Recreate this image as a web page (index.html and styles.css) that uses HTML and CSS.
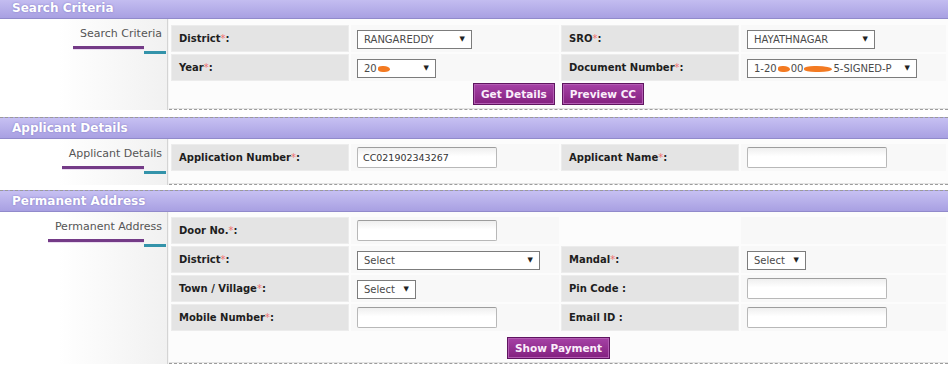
FILE: index.html
```html
<!DOCTYPE html>
<html lang="en">
<head>
  <meta charset="UTF-8">
  <meta name="viewport" content="width=device-width, initial-scale=1.0">
  <title>Certified Copy Request</title>
  <link rel="stylesheet" href="styles.css">
</head>
<body>
<div class="page">

  <!-- search criteria -->
  <div class="section first">
    <div class="sec-head">Search Criteria</div>
    <div class="sec-body">
      <div class="side">
        <div class="side-title">Search Criteria
          <div class="uline"><i class="purple"></i><i class="teal"></i></div>
        </div>
      </div>
      <div class="main">
        <table class="form top4">
          <colgroup><col class="c-lbl"><col class="c-val"><col class="c-lbl"><col></colgroup>
          <tr>
            <td class="lbl">District<span class="req">*</span>:</td>
            <td class="val"><span class="sel w-rr">RANGAREDDY<b>▼</b></span></td>
            <td class="lbl">SRO<span class="req">*</span>:</td>
            <td class="val"><span class="sel w-sro">HAYATHNAGAR<b>▼</b></span></td>
          </tr>
          <tr>
            <td class="lbl">Year<span class="req">*</span>:</td>
            <td class="val"><span class="sel w-year"><span>20<em class="blot"></em></span><b>▼</b></span></td>
            <td class="lbl">Document Number<span class="req">*</span>:</td>
            <td class="val"><span class="sel w-doc"><span>1-20<em class="blot"></em>00<em class="blot long"></em>5-SIGNED-P</span><b>▼</b></span></td>
          </tr>
        </table>
        <div class="actions">
          <button class="btn">Get Details</button>
          <button class="btn">Preview CC</button>
        </div>
      </div>
    </div>
  </div>

  <!-- applicant -->
  <div class="section">
    <div class="sec-head">Applicant Details</div>
    <div class="sec-body">
      <div class="side">
        <div class="side-title">Applicant Details
          <div class="uline"><i class="purple"></i><i class="teal"></i></div>
        </div>
      </div>
      <div class="main">
        <table class="form">
          <colgroup><col class="c-lbl"><col class="c-val"><col class="c-lbl"><col></colgroup>
          <tr>
            <td class="lbl">Application Number<span class="req">*</span>:</td>
            <td class="val"><input class="txt" type="text" value="CC021902343267"></td>
            <td class="lbl">Applicant Name<span class="req">*</span>:</td>
            <td class="val"><input class="txt" type="text"></td>
          </tr>
        </table>
        <div class="actions empty"></div>
      </div>
    </div>
  </div>

  <!-- address -->
  <div class="section">
    <div class="sec-head">Permanent Address</div>
    <div class="sec-body">
      <div class="side">
        <div class="side-title">Permanent Address
          <div class="uline"><i class="purple"></i><i class="teal"></i></div>
        </div>
      </div>
      <div class="main">
        <table class="form">
          <colgroup><col class="c-lbl"><col class="c-val"><col class="c-lbl"><col></colgroup>
          <tr>
            <td class="lbl">Door No.<span class="req">*</span>:</td>
            <td class="val"><input class="txt" type="text"></td>
            <td class="blank"></td>
            <td class="val"></td>
          </tr>
          <tr>
            <td class="lbl">District<span class="req">*</span>:</td>
            <td class="val"><span class="sel w-dist">Select<b>▼</b></span></td>
            <td class="lbl">Mandal<span class="req">*</span>:</td>
            <td class="val"><span class="sel w-small">Select<b>▼</b></span></td>
          </tr>
          <tr>
            <td class="lbl">Town / Village<span class="req">*</span>:</td>
            <td class="val"><span class="sel w-small">Select<b>▼</b></span></td>
            <td class="lbl">Pin Code :</td>
            <td class="val"><input class="txt" type="text"></td>
          </tr>
          <tr>
            <td class="lbl">Mobile Number<span class="req">*</span>:</td>
            <td class="val"><input class="txt" type="text"></td>
            <td class="lbl">Email ID :</td>
            <td class="val"><input class="txt" type="text"></td>
          </tr>
        </table>
        <div class="actions pad">
          <button class="btn">Show Payment</button>
        </div>
      </div>
    </div>
  </div>

</div>
</body>
</html>
```

FILE: styles.css
```css
body { /* page */
  margin: 0;
  font-family: "DejaVu Sans", Verdana, sans-serif;
  background-color: #fff;
  color: #222;
}
.page {
  width: 948px;
  margin-top: -2px; /* top of the first bar is scrolled off */
  overflow: hidden;
}
.section {
  margin-bottom: 5px;
}
.section.first {
  margin-bottom: 7px;
}
.sec-head { /* lavender title bar */
  height: 20px;
  line-height: 21px;
  padding-left: 12px;
  background: linear-gradient(#c6c0f2, #a8a0e2);
  border-top: 1px dashed #9a9a9a;
  border-bottom: 1px solid #918acb;
  color: #fff;
  font-size: 12px;
  font-weight: bold;
  text-shadow: 0 0 2px #7d74c2;
}
.first .sec-head {
  border-top: none;
}
.sec-body {
  display: flex;
}
.side { /* left caption column */
  width: 168px;
  flex: none;
  padding: 8px 1px 0 0;
  box-sizing: border-box;
  text-align: right;
  background: linear-gradient(to right, #fff 35%, #f1f1f1);
  border-right: 1px solid #d4d4d4;
  box-shadow: 1px 0 0 #f4f4f4;
}
.side-title {
  display: inline-block;
  margin-right: 4px;
  font-size: 11px;
  color: #555;
  text-align: left;
}
.uline {
  display: flex;
  margin: 6px -4px 0 -7px;
}
.uline .purple {
  flex: 1;
  height: 3px;
  background: #743b87;
  border-bottom: 1px solid #eadcf0;
}
.uline .teal {
  width: 22px;
  height: 3px;
  margin-top: 5px;
  background: #3393aa;
}
.main {
  flex: 1;
  margin-left: 1px;
  background: #fcfcfc;
  border-bottom: 1px dashed #9c9c9c;
}
.form {
  width: 100%;
  table-layout: fixed;
  border-collapse: separate;
  border-spacing: 2px;
  margin-top: 3px;
}
.form.top4 {
  margin-top: 4px;
}
.c-lbl { width: 178px; }
.c-val { width: 208px; }
.form td {
  height: 27px;
  padding: 0;
  vertical-align: middle;
}
.form td.lbl { /* grey label cell */
  padding-left: 8px;
  background: #e4e4e4;
  box-shadow: inset 0 0 0 1px #ececec;
  font-size: 10px;
  font-weight: bold;
  color: #1e1e1e;
  white-space: nowrap;
}
.form td.val {
  padding-left: 6px;
  background: #f8f8f8;
}
.form td.blank {
  background: transparent;
}
.req { /* required star */
  color: #f07070;
  font-weight: normal;
}
.sel { /* drop down look */
  display: inline-flex;
  align-items: center;
  justify-content: space-between;
  box-sizing: border-box;
  height: 19px;
  padding: 0 6px 0 6px;
  border: 1px solid #7c7c7c;
  background: #fff;
  font-size: 10px;
  color: #4a4a4a;
  vertical-align: middle;
}
.sel b {
  font-size: 7px;
  font-weight: normal;
  color: #222;
}
.w-rr { width: 115px; }
.w-sro { width: 128px; }
.w-year { width: 79px; }
.w-doc { width: 170px; }
.w-dist { width: 183px; }
.w-small { width: 59px; }
.blot { /* orange redaction scribble */
  display: inline-block;
  width: 12px;
  height: 6px;
  margin: 0 1px;
  background: #f37a22;
  border-radius: 40% 60% 50% 45%;
  vertical-align: middle;
}
.blot.long {
  width: 28px;
}
.txt { /* text box */
  box-sizing: border-box;
  width: 140px;
  height: 21px;
  padding: 0 5px;
  border: 1px solid #b8b8b8;
  border-top-color: #9d9d9d;
  border-radius: 2px;
  background: linear-gradient(#efefef, #fff 45%);
  font-family: "DejaVu Sans", Verdana, sans-serif;
  font-size: 9.5px;
  color: #333;
  vertical-align: middle;
}
.actions {
  display: flex;
  justify-content: center;
  gap: 7px;
  padding-bottom: 3px;
  border-bottom: 1px solid #e2e2e2;
}
.actions.pad {
  padding-top: 4px;
}
.actions.empty {
  height: 7px;
}
.btn { /* purple button */
  height: 22px;
  padding: 0 7px;
  border: 1px solid #5f1560;
  background: linear-gradient(#a642a6, #83207f);
  box-shadow: inset 0 0 0 1px #b35db3;
  color: #fbeefb;
  font-family: "DejaVu Sans", Verdana, sans-serif;
  font-size: 10.5px;
  font-weight: bold;
  cursor: pointer;
}
```
